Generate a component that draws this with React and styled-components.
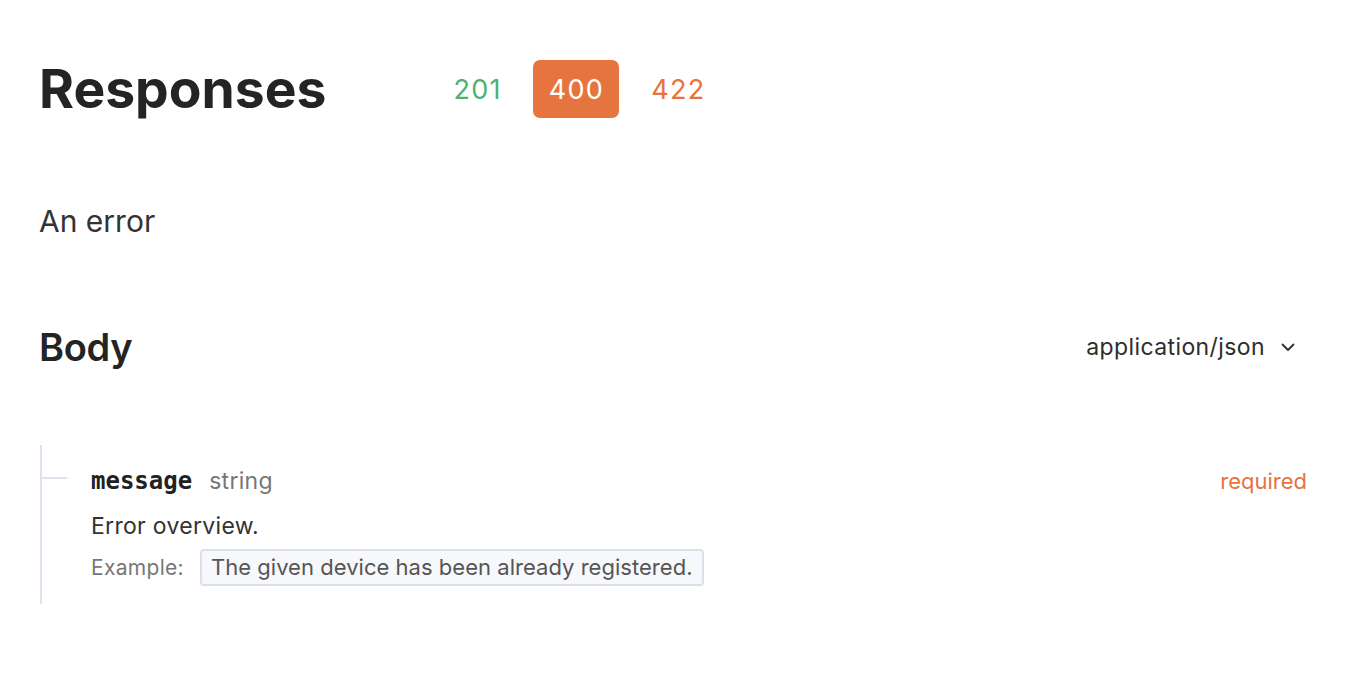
import React from "react";
import styled, { createGlobalStyle } from "styled-components";

const Global = createGlobalStyle`
  html, body { margin: 0; padding: 0; background: #fff; }
  body { font-family: Inter, "Noto Sans", sans-serif; color: #2d2d2d; -webkit-font-smoothing: antialiased; }
`;

const Page = styled.main`
  padding: 58px 39px 0 39px;
  width: 1346px;
  box-sizing: border-box;
`;

const Header = styled.header`
  display: flex;
  align-items: center;
  gap: 111px;
`;

const Title = styled.h1`
  margin: 0;
  font-size: 53.4px;
  font-weight: 700;
  letter-spacing: 0;
  color: #242424;
  line-height: 62px;
`;

const Tabs = styled.div`
  display: flex;
  align-items: center;
  gap: 16px;
`;

const Tab = styled.button`
  border: 0;
  font-family: inherit;
  font-size: 27px;
  letter-spacing: 1.3px;
  font-weight: 400;
  height: 58px;
  padding: 0 15px 0 16px;
  border-radius: 7px;
  cursor: pointer;
  background: ${(p) => (p.$active ? "#e5743e" : "transparent")};
  color: ${(p) => (p.$active ? "#fff" : p.$tone)};
`;

const Description = styled.p`
  margin: 81px 0 0;
  font-size: 30px;
  color: #333;
  line-height: 40px;
`;

const BodyHeader = styled.div`
  display: flex;
  align-items: center;
  justify-content: space-between;
  margin-top: 83px;
  padding-right: 11px;
`;

const SectionTitle = styled.h2`
  margin: 0;
  font-size: 38px;
  font-weight: 600;
  color: #242424;
  letter-spacing: -0.3px;
`;

const MediaSelect = styled.button`
  display: flex;
  align-items: center;
  gap: 15px;
  border: 0;
  background: none;
  font-family: inherit;
  font-size: 23px;
  letter-spacing: 0.4px;
  color: #2d2d2d;
  padding: 0;
  cursor: pointer;
`;

const Tree = styled.div`
  margin-top: 75px;
  margin-left: 1px;
  border-left: 2px solid #dfe2ee;
  padding: 14px 0 18px 0;
`;

const Field = styled.div`
  position: relative;
  padding-left: 49px;
`;

const Branch = styled.span`
  position: absolute;
  left: 0;
  top: 18px;
  width: 25px;
  height: 2px;
  background: #dfe2ee;
`;

const FieldHead = styled.div`
  display: flex;
  align-items: baseline;
  gap: 17px;
  line-height: 44px;
`;

const FieldName = styled.code`
  font-family: "DejaVu Sans Mono", "Liberation Mono", monospace;
  font-weight: 700;
  font-size: 24px;
  color: #222;
`;

const FieldType = styled.span`
  font-size: 23px;
  letter-spacing: 0.3px;
  color: #777;
`;

const Required = styled.span`
  margin-left: auto;
  font-size: 22px;
  color: #e5743e;
`;

const FieldText = styled.p`
  margin: 1px 0 0;
  font-size: 23px;
  letter-spacing: 0.3px;
  color: #333;
  line-height: 44px;
`;

const ExampleRow = styled.div`
  display: flex;
  align-items: center;
  gap: 16px;
  margin-top: 1px;
`;

const ExampleLabel = styled.span`
  font-size: 21px;
  letter-spacing: 0.3px;
  color: #777;
`;

const ExampleValue = styled.span`
  font-size: 22px;
  letter-spacing: 0.03px;
  color: #555;
  background: #f7f8fb;
  border: 2px solid #dbe0eb;
  border-radius: 4px;
  padding: 0 9px;
  line-height: 33px;
`;

function Chevron() {
  return (
    <svg width="16" height="16" viewBox="0 0 16 16" fill="none">
      <path d="M2.5 5.5l5.5 5.5 5.5-5.5" stroke="#2d2d2d" strokeWidth="1.8" strokeLinecap="round" strokeLinejoin="round" />
    </svg>
  );
}

export default function App() {
  return (
    <>
      <Global />
      <Page>
        <Header>
          <Title>Responses</Title>
          <Tabs>
            <Tab $tone="#4fb072">201</Tab>
            <Tab $active>400</Tab>
            <Tab $tone="#e5743e">422</Tab>
          </Tabs>
        </Header>
        <Description>An error</Description>
        <BodyHeader>
          <SectionTitle>Body</SectionTitle>
          <MediaSelect>
            application/json
            <Chevron />
          </MediaSelect>
        </BodyHeader>
        <Tree>
          <Field>
            <Branch />
            <FieldHead>
              <FieldName>message</FieldName>
              <FieldType>string</FieldType>
              <Required>required</Required>
            </FieldHead>
            <FieldText>Error overview.</FieldText>
            <ExampleRow>
              <ExampleLabel>Example:</ExampleLabel>
              <ExampleValue>The given device has been already registered.</ExampleValue>
            </ExampleRow>
          </Field>
        </Tree>
      </Page>
    </>
  );
}
